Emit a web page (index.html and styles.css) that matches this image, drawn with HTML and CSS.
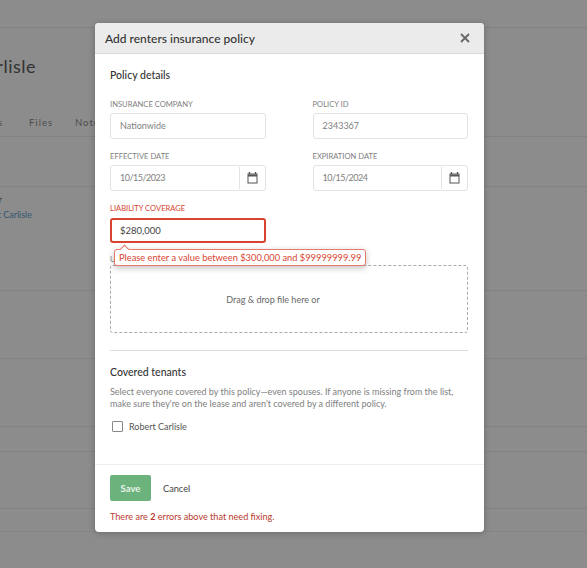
FILE: index.html
```html
<!DOCTYPE html>
<html lang="en">
<head>
  <meta charset="UTF-8">
  <meta name="viewport" content="width=device-width, initial-scale=1.0">
  <title>Add renters insurance policy</title>
  <link rel="stylesheet" href="styles.css">
</head>
<body>
  <div class="page">
    <div class="top-line"></div>
    <div class="page-title"><span>Robert Carlisle</span></div>
    <div class="tabs">
      <span class="tab tab-cut"><span>Details</span></span>
      <span class="tab">Files</span>
      <span class="tab">Notes</span>
    </div>
    <div class="row row-first"></div>
    <div class="row row-tenant">
      <div class="tenant-label"><span>Renter</span></div>
      <div class="tenant-link"><span>Robert Carlisle</span></div>
    </div>
    <div class="row row-b"></div>
    <div class="row row-b"></div>
    <div class="row row-c"></div>
    <div class="row row-d"></div>
    <div class="row row-e"></div>
  </div>

  <div class="modal">
    <div class="modal-header">
      <div class="modal-title">Add renters insurance policy</div>
      <svg class="close" width="10" height="10" viewBox="0 0 10 10">
        <path d="M1 1l8 8M9 1l-8 8" stroke="#666" stroke-width="1.800" fill="none"/>
      </svg>
    </div>

    <div class="modal-body">
      <div class="section-title">Policy details</div>

      <div class="fields">
        <div class="field">
          <label class="label">INSURANCE COMPANY</label>
          <div class="input">Nationwide</div>
        </div>
        <div class="field">
          <label class="label">POLICY ID</label>
          <div class="input">2343367</div>
        </div>
        <div class="field">
          <label class="label">EFFECTIVE DATE</label>
          <div class="input input-date">
            <span class="date-value">10/15/2023</span>
            <span class="date-btn">
              <svg width="11" height="12" viewBox="0 0 11 12"><path d="M2.500 0v2M8.500 0v2" stroke="#555" stroke-width="1.400"/><rect x="1" y="2" width="9" height="9" fill="none" stroke="#555"/><path d="M1 3.500h9" stroke="#555" stroke-width="2"/></svg>
            </span>
          </div>
        </div>
        <div class="field">
          <label class="label">EXPIRATION DATE</label>
          <div class="input input-date">
            <span class="date-value">10/15/2024</span>
            <span class="date-btn">
              <svg width="11" height="12" viewBox="0 0 11 12"><path d="M2.500 0v2M8.500 0v2" stroke="#555" stroke-width="1.400"/><rect x="1" y="2" width="9" height="9" fill="none" stroke="#555"/><path d="M1 3.500h9" stroke="#555" stroke-width="2"/></svg>
            </span>
          </div>
        </div>
        <div class="field">
          <label class="label label-error">LIABILITY COVERAGE</label>
          <div class="input input-error">$280,000</div>
        </div>
      </div>

      <div class="upload">
        <label class="label">UPLOAD POLICY</label>
        <div class="tooltip">Please enter a value between $300,000 and $99999999.99</div>
        <div class="dropzone">Drag &amp; drop file here or</div>
      </div>

      <div class="divider"></div>

      <div class="section-title tenants-title">Covered tenants</div>
      <p class="help">Select everyone covered by this policy—even spouses. If anyone is missing from the list, make sure they're on the lease and aren't covered by a different policy.</p>
      <div class="check-row">
        <span class="checkbox"></span>
        <span>Robert Carlisle</span>
      </div>
    </div>

    <div class="modal-footer">
      <div class="actions">
        <button class="btn-save">Save</button>
        <span class="cancel">Cancel</span>
      </div>
      <div class="form-error">There are <b>2</b> errors above that need fixing.</div>
    </div>
  </div>
</body>
</html>
```

FILE: styles.css
```css
html, body {
  margin: 0;
  padding: 0;
  height: 568px;
  overflow: hidden;
}
body {
  font-family: Lato, "Liberation Sans", sans-serif;
  background-color: #8c8c8c;
  color: #333;
  position: relative;
}

/* page behind the overlay */
.page {
  height: 568px;
  color: #3a3a3a;
}
.top-line {
  height: 27px;
  border-bottom: 1px solid #828282;
}
.page-title {
  width: 36px;
  height: 76px;
  overflow: hidden;
  display: flex;
  justify-content: flex-end;
  align-items: center;
  font-size: 18px;
  letter-spacing: 0.5px;
  white-space: nowrap;
  color: #333;
}
.tabs {
  box-sizing: border-box;
  height: 32px;
  padding-top: 13px;
  margin-left: -24px;
  display: flex;
  gap: 22px;
  font-size: 9.500px;
  letter-spacing: 1px;
  color: #4c4c4c;
}
.tab-cut {
  width: 27px;
  margin-right: 4px;
  overflow: hidden;
  display: flex;
  justify-content: flex-end;
}
.tab {
  display: block;
}
.tab-cut.tab {
  display: flex;
}
.row {
  border-top: 1px solid #828282;
  box-sizing: border-box;
}
.row-first { height: 50px; }
.row-tenant { height: 104px; padding-top: 7px; font-size: 9px; }
.row-b { height: 68px; }
.row-c { height: 25px; }
.row-d { height: 57px; }
.row-e { height: 24px; border-bottom: 1px solid #858585; }
.tenant-label, .tenant-link {
  display: flex;
  justify-content: flex-end;
  overflow: hidden;
  white-space: nowrap;
}
.tenant-label { width: 2px; height: 12px; }
.tenant-link { width: 32px; margin-top: 3px; color: #35566f; }

/* modal */
.modal {
  position: absolute;
  left: 95px;
  top: 23px;
  width: 389px;
  height: 509px;
  background-color: #fff;
  border-radius: 4px;
  box-shadow: 0 1px 6px rgba(0, 0, 0, 0.25);
  display: flex;
  flex-direction: column;
}
.modal-header {
  height: 30px;
  background-color: #ebebeb;
  border-bottom: 1px solid #d9d9d9;
  border-radius: 4px 4px 0 0;
  display: flex;
  justify-content: space-between;
  align-items: center;
  padding: 0 14px 0 10px;
  flex-shrink: 0;
}
.modal-title {
  font-size: 12px;
  font-weight: 500;
  color: #333;
}
.close { display: block; }
.modal-body {
  padding: 14px 16px 0 15px;
  flex: 1;
}
.section-title {
  font-size: 10.500px;
  line-height: 14px;
  font-weight: 500;
  color: #333;
}
.fields {
  display: grid;
  grid-template-columns: 156px 155.500px;
  column-gap: 46.500px;
  margin-top: 17px;
}
.field { height: 52px; }
.label {
  display: block;
  font-size: 7.600px;
  line-height: 10px;
  height: 14px;
  color: #808080;
}
.label-error { color: #d9442f; }
.input {
  box-sizing: border-box;
  height: 26px;
  border: 1px solid #e3e3e3;
  border-radius: 3px;
  padding: 0 9px;
  font-size: 9px;
  line-height: 24px;
  color: #808080;
}
.input-date {
  display: flex;
  justify-content: space-between;
  padding: 0 0 0 9px;
}
.date-value { letter-spacing: -0.500px; }
.date-btn {
  width: 25px;
  border-left: 1px solid #e3e3e3;
  margin: 1px 0;
  display: flex;
  align-items: center;
  justify-content: center;
}
.input-error {
  height: 25px;
  margin-top: 1px;
  line-height: 21px;
  border: 2px solid #d9442f;
  padding: 0 8px;
  font-size: 9.500px;
  color: #444;
}
.upload {
  position: relative;
  margin-top: -1px;
}
.upload .label { height: 11px; }
.tooltip {
  position: absolute;
  left: 4px;
  top: -5px;
  height: 15px;
  line-height: 15px;
  padding: 0 4px;
  white-space: nowrap;
  background-color: #fff;
  border: 1px solid #e7796a;
  border-radius: 3px;
  box-shadow: 0 2px 6px rgba(0, 0, 0, 0.25);
  font-size: 9.300px;
  color: #d9442f;
}
.tooltip::before {
  content: "";
  position: absolute;
  left: 6px;
  top: -4px;
  width: 6px;
  height: 6px;
  background-color: #fff;
  border-top: 1px solid #e7796a;
  border-left: 1px solid #e7796a;
  transform: rotate(45deg);
}
.dropzone {
  box-sizing: border-box;
  height: 68px;
  padding-right: 32px;
  border: 1px dashed #aaa;
  border-radius: 3px;
  display: flex;
  align-items: center;
  justify-content: center;
  font-size: 9px;
  color: #666;
}
.divider {
  height: 1px;
  background-color: #ddd;
  margin-top: 17px;
}
.tenants-title {
  margin-top: 14px;
}
.help {
  margin: 7px 0 0;
  font-size: 9px;
  line-height: 12px;
  color: #808080;
}
.check-row {
  display: flex;
  align-items: center;
  gap: 6px;
  margin-top: 11px;
  padding-left: 2px;
  font-size: 9px;
  color: #555;
}
.checkbox {
  box-sizing: border-box;
  width: 11px;
  height: 11px;
  border: 1px solid #888;
  border-radius: 1px;
}
.modal-footer {
  border-top: 1px solid #eee;
  padding: 10px 15px 0;
  height: 57px;
  flex-shrink: 0;
}
.actions {
  display: flex;
  align-items: center;
  gap: 12px;
}
.btn-save {
  width: 41px;
  height: 26px;
  border: none;
  border-radius: 2px;
  background-color: #6bb27c;
  color: #e8f4ea;
  font-family: inherit;
  font-size: 9.500px;
  font-weight: 700;
  padding: 0;
}
.cancel {
  font-size: 9.200px;
  color: #444;
}
.form-error {
  margin-top: 10px;
  font-size: 9.100px;
  line-height: 12px;
  color: #b83a2e;
}
```
